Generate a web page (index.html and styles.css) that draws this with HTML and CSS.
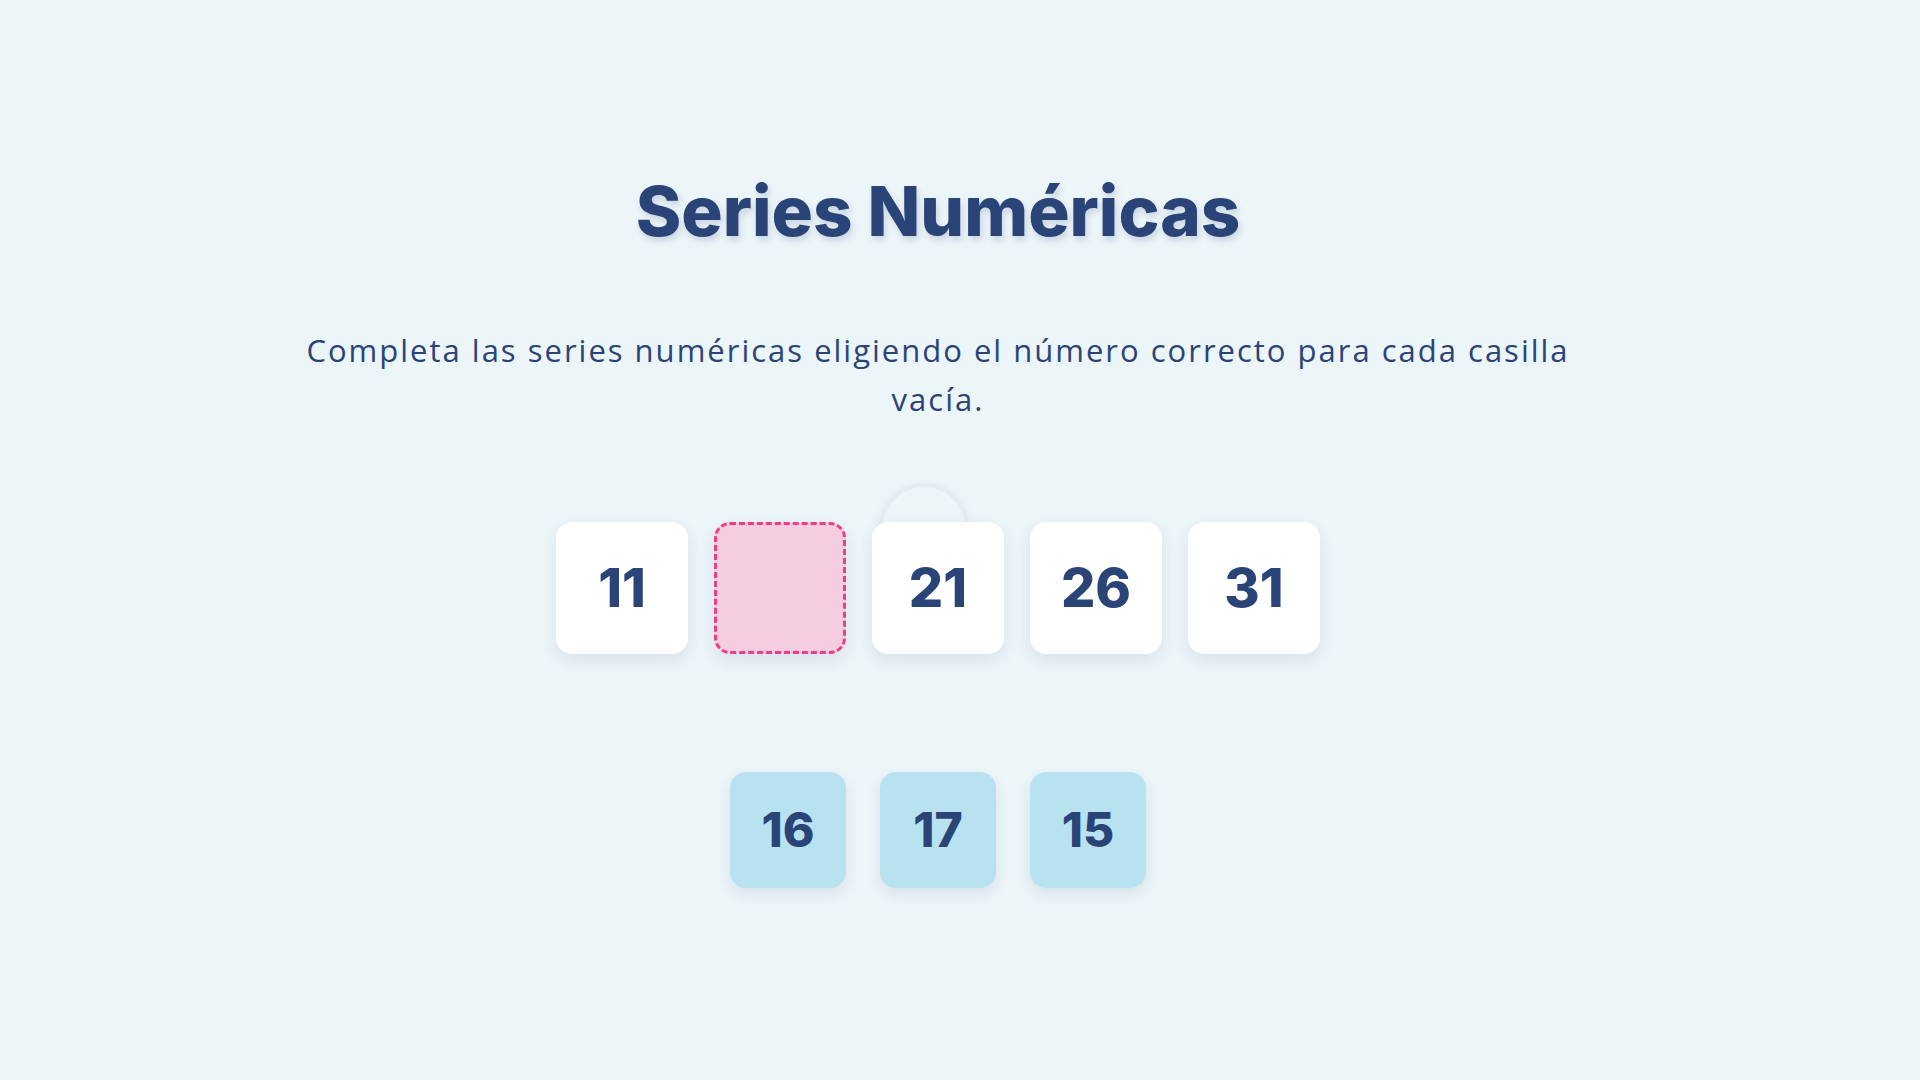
FILE: index.html
```html
<!DOCTYPE html>
<html lang="es">
<head>
    <meta charset="UTF-8">
    <meta name="viewport" content="width=device-width, initial-scale=1.0">
    <title>Series Numéricas</title>
    <link rel="stylesheet" href="styles.css">
</head>
<body>
    <div class="page">
        <h1 class="title">Series Numéricas</h1>
        <p class="instructions">Completa las series numéricas eligiendo el número correcto para cada casilla vacía.</p>

        <div class="series">
            <div class="cell">11</div>
            <div class="cell empty"></div>
            <div class="cell">21</div>
            <div class="cell">26</div>
            <div class="cell">31</div>
            <span class="ring"></span>
        </div>

        <div class="options">
            <div class="option">16</div>
            <div class="option">17</div>
            <div class="option">15</div>
        </div>
    </div>
</body>
</html>
```

FILE: styles.css
```css
body {
    margin: 0;
    background: #ecf5f8;
    color: #2b4478;
    font-family: 'Open Sans', Arial, sans-serif;
    min-height: 100vh;
}

.page {
    margin-right: 44px;
    display: flex;
    flex-direction: column;
    align-items: center;
    text-align: center;
    padding-top: 170px;
}

.title {
    font-family: 'Inter', Arial, sans-serif;
    font-size: 69px;
    font-weight: 800;
    line-height: 1.2;
    margin: 0;
    text-shadow: 2px 4px 6px rgba(43, 68, 120, 0.18);
}

.instructions {
    font-size: 31px;
    letter-spacing: 2px;
    line-height: 1.6;
    max-width: 1300px;
    margin: 73px 0 0;
}

.series {
    position: relative;
    display: flex;
    gap: 26px;
    margin-top: 97px;
}

.cell {
    position: relative;
    z-index: 1;
    width: 132px;
    height: 132px;
    display: flex;
    align-items: center;
    justify-content: center;
    background: #fff;
    border-radius: 16px;
    box-shadow: 0 6px 16px rgba(43, 68, 120, 0.1);
    font-family: 'Inter', Arial, sans-serif;
    font-size: 54px;
    font-weight: 800;
}

.cell.empty {
    box-sizing: border-box;
    background: #f4cde0;
    border: 3px dashed #ec3d86;
}

.ring {
    position: absolute;
    left: 323px;
    top: -39px;
    width: 82px;
    height: 82px;
    border: 4px solid #e2edf1;
    border-radius: 50%;
    box-shadow: 0 2px 8px rgba(43, 68, 120, 0.08);
}

.options {
    display: flex;
    gap: 34px;
    margin-top: 118px;
}

.option {
    width: 116px;
    height: 116px;
    display: flex;
    align-items: center;
    justify-content: center;
    background: #b8e2ef;
    border-radius: 16px;
    box-shadow: 0 6px 14px rgba(43, 68, 120, 0.1);
    font-family: 'Inter', Arial, sans-serif;
    font-size: 48px;
    font-weight: 800;
}
```
